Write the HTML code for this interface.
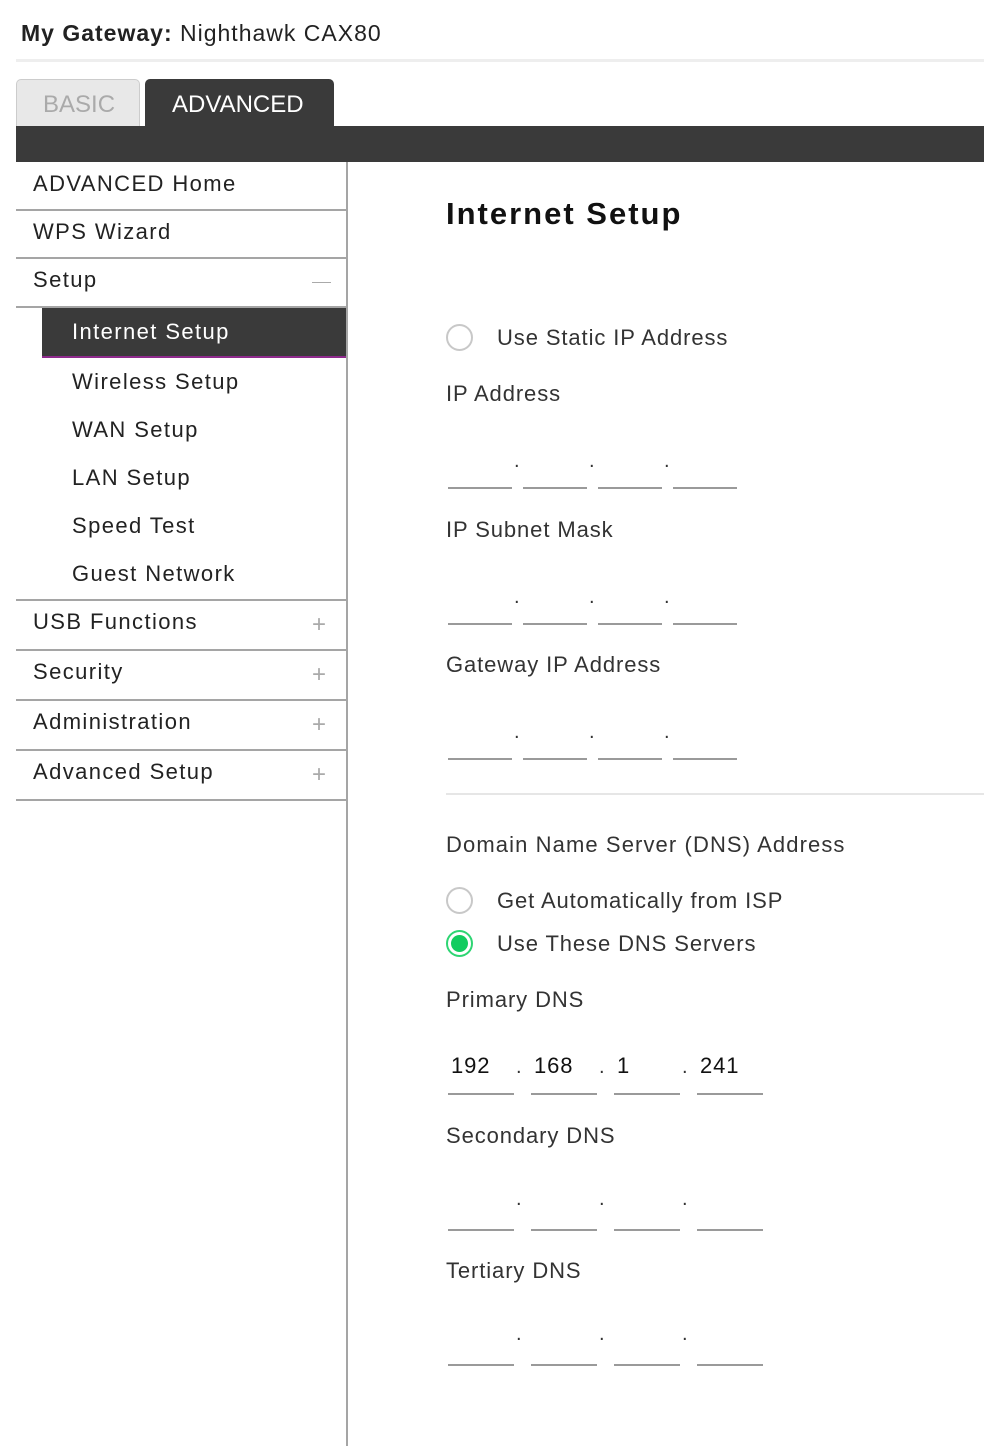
<!DOCTYPE html>
<html><head><meta charset="utf-8"><style>
*{margin:0;padding:0;box-sizing:border-box}
body{width:984px;height:1446px;background:#fff;position:relative;overflow:hidden;font-family:"Liberation Sans",sans-serif;color:#222}
.a{position:absolute}
.t{position:absolute;font-size:22px;line-height:26px;white-space:nowrap;letter-spacing:1.4px}
.hl{position:absolute;height:2px;background:#a5a5a5}
.ul{position:absolute;height:2px;background:#9a9a9a}
.dot{position:absolute;font-size:20px;color:#333}
.pl{position:absolute;color:#aaa;font-size:24px;line-height:26px;font-weight:300}
.lab{position:absolute;font-size:22px;line-height:26px;color:#333;white-space:nowrap;letter-spacing:0.9px}
.rad{position:absolute;width:27px;height:27px;border:2px solid #c8c8c8;border-radius:50%}
</style></head><body>
<div class="t" style="left:21px;top:20px;font-size:23px;color:#222;letter-spacing:1px"><b style="font-weight:600">My Gateway:</b> Nighthawk CAX80</div>
<div class="a" style="left:16px;top:59px;width:968px;height:3px;background:#eee"></div>
<div class="a" style="left:16px;top:79px;width:124px;height:48px;background:#e8e8e8;border:1px solid #ccc;border-bottom:none;border-radius:5px 5px 0 0"></div>
<div class="t" style="left:43px;top:92px;font-size:24px;color:#aaa;letter-spacing:0">BASIC</div>
<div class="a" style="left:145px;top:79px;width:189px;height:48px;background:#3a3a3a;border-radius:5px 5px 0 0"></div>
<div class="t" style="left:172px;top:92px;font-size:24px;color:#fff;letter-spacing:0">ADVANCED</div>
<div class="a" style="left:16px;top:126px;width:968px;height:36px;background:#3a3a3a"></div>
<div class="a" style="left:346px;top:162px;width:2px;height:1284px;background:#a5a5a5"></div>

<div class="t" style="left:33px;top:171px">ADVANCED Home</div>
<div class="hl" style="left:16px;top:209px;width:330px"></div>
<div class="t" style="left:33px;top:219px">WPS Wizard</div>
<div class="hl" style="left:16px;top:257px;width:330px"></div>
<div class="t" style="left:33px;top:267px">Setup</div>
<div class="a" style="left:312px;top:282px;width:19px;height:1px;background:#aaa"></div>
<div class="hl" style="left:16px;top:306px;width:330px"></div>
<div class="a" style="left:42px;top:308px;width:304px;height:48px;background:#3a3a3a"></div>
<div class="a" style="left:42px;top:356px;width:304px;height:2px;background:#8e2a8c"></div>
<div class="t" style="left:72px;top:319px;color:#fff">Internet Setup</div>
<div class="t" style="left:72px;top:369px">Wireless Setup</div>
<div class="t" style="left:72px;top:417px">WAN Setup</div>
<div class="t" style="left:72px;top:465px">LAN Setup</div>
<div class="t" style="left:72px;top:513px">Speed Test</div>
<div class="t" style="left:72px;top:561px">Guest Network</div>
<div class="hl" style="left:16px;top:599px;width:330px"></div>
<div class="t" style="left:33px;top:609px">USB Functions</div>
<div class="pl" style="left:312px;top:612px">+</div>
<div class="hl" style="left:16px;top:649px;width:330px"></div>
<div class="t" style="left:33px;top:659px">Security</div>
<div class="pl" style="left:312px;top:662px">+</div>
<div class="hl" style="left:16px;top:699px;width:330px"></div>
<div class="t" style="left:33px;top:709px">Administration</div>
<div class="pl" style="left:312px;top:712px">+</div>
<div class="hl" style="left:16px;top:749px;width:330px"></div>
<div class="t" style="left:33px;top:759px">Advanced Setup</div>
<div class="pl" style="left:312px;top:762px">+</div>
<div class="hl" style="left:16px;top:799px;width:330px"></div>

<div class="t" style="left:446px;top:196px;font-size:31px;line-height:36px;font-weight:bold;color:#111;letter-spacing:2px">Internet Setup</div>
<div class="rad" style="left:446px;top:324px"></div>
<div class="lab" style="left:497px;top:325px">Use Static IP Address</div>
<div class="lab" style="left:446px;top:381px">IP Address</div>
<div class="ul" style="left:448px;top:487px;width:64px"></div><div class="ul" style="left:523px;top:487px;width:64px"></div><div class="ul" style="left:598px;top:487px;width:64px"></div><div class="ul" style="left:673px;top:487px;width:64px"></div>
<div class="dot" style="left:514px;top:450px">.</div><div class="dot" style="left:589px;top:450px">.</div><div class="dot" style="left:664px;top:450px">.</div>
<div class="lab" style="left:446px;top:517px">IP Subnet Mask</div>
<div class="ul" style="left:448px;top:623px;width:64px"></div><div class="ul" style="left:523px;top:623px;width:64px"></div><div class="ul" style="left:598px;top:623px;width:64px"></div><div class="ul" style="left:673px;top:623px;width:64px"></div>
<div class="dot" style="left:514px;top:586px">.</div><div class="dot" style="left:589px;top:586px">.</div><div class="dot" style="left:664px;top:586px">.</div>
<div class="lab" style="left:446px;top:652px">Gateway IP Address</div>
<div class="ul" style="left:448px;top:758px;width:64px"></div><div class="ul" style="left:523px;top:758px;width:64px"></div><div class="ul" style="left:598px;top:758px;width:64px"></div><div class="ul" style="left:673px;top:758px;width:64px"></div>
<div class="dot" style="left:514px;top:721px">.</div><div class="dot" style="left:589px;top:721px">.</div><div class="dot" style="left:664px;top:721px">.</div>
<div class="a" style="left:446px;top:793px;width:538px;height:2px;background:#e6e6e6"></div>
<div class="lab" style="left:446px;top:832px;letter-spacing:1.1px">Domain Name Server (DNS) Address</div>
<div class="rad" style="left:446px;top:887px"></div>
<div class="lab" style="left:497px;top:888px">Get Automatically from ISP</div>
<div class="rad" style="left:446px;top:930px;border-color:#2ed573;background:#fff"></div>
<div class="a" style="left:451px;top:935px;width:17px;height:17px;border-radius:50%;background:#12cc5f"></div>
<div class="lab" style="left:497px;top:931px">Use These DNS Servers</div>
<div class="lab" style="left:446px;top:987px">Primary DNS</div>
<div class="lab" style="left:451px;top:1053px;color:#111">192</div><div class="lab" style="left:534px;top:1053px;color:#111">168</div><div class="lab" style="left:617px;top:1053px;color:#111">1</div><div class="lab" style="left:700px;top:1053px;color:#111">241</div>
<div class="dot" style="left:516px;top:1056px">.</div><div class="dot" style="left:599px;top:1056px">.</div><div class="dot" style="left:682px;top:1056px">.</div>
<div class="ul" style="left:448px;top:1093px;width:66px"></div><div class="ul" style="left:531px;top:1093px;width:66px"></div><div class="ul" style="left:614px;top:1093px;width:66px"></div><div class="ul" style="left:697px;top:1093px;width:66px"></div>
<div class="lab" style="left:446px;top:1123px">Secondary DNS</div>
<div class="dot" style="left:516px;top:1188px">.</div><div class="dot" style="left:599px;top:1188px">.</div><div class="dot" style="left:682px;top:1188px">.</div>
<div class="ul" style="left:448px;top:1229px;width:66px"></div><div class="ul" style="left:531px;top:1229px;width:66px"></div><div class="ul" style="left:614px;top:1229px;width:66px"></div><div class="ul" style="left:697px;top:1229px;width:66px"></div>
<div class="lab" style="left:446px;top:1258px">Tertiary DNS</div>
<div class="dot" style="left:516px;top:1323px">.</div><div class="dot" style="left:599px;top:1323px">.</div><div class="dot" style="left:682px;top:1323px">.</div>
<div class="ul" style="left:448px;top:1364px;width:66px"></div><div class="ul" style="left:531px;top:1364px;width:66px"></div><div class="ul" style="left:614px;top:1364px;width:66px"></div><div class="ul" style="left:697px;top:1364px;width:66px"></div>
</body></html>
